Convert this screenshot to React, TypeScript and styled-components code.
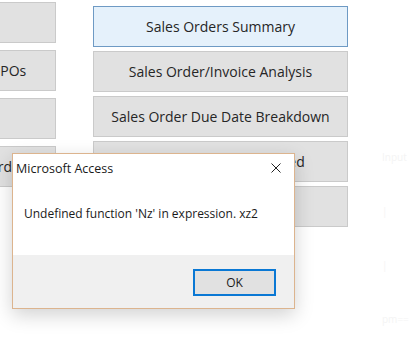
import React from "react";
import styled, { createGlobalStyle } from "styled-components";

const GlobalStyle = createGlobalStyle`
  body {
    margin: 0;
    background: #ffffff;
    overflow: hidden;
  }
`;

const Page = styled.div`
  position: relative;
  width: 409px;
  height: 359px;
  overflow: hidden;
  display: flex;
  align-items: flex-start;
  background: #ffffff;
  font-family: "Open Sans", "Noto Sans", sans-serif;
`;

const LeftColumn = styled.div`
  display: flex;
  flex-direction: column;
  gap: 7px;
  width: 170px;
  margin-left: -114px;
  padding-top: 2px;
  flex-shrink: 0;
`;

const RightColumn = styled.div`
  display: flex;
  flex-direction: column;
  gap: 4px;
  width: 255px;
  margin-left: 37px;
  padding-top: 6px;
  flex-shrink: 0;
`;

const MenuButton = styled.div<{ $active?: boolean; $faint?: boolean }>`
  box-sizing: border-box;
  height: 41px;
  display: flex;
  align-items: center;
  justify-content: center;
  white-space: nowrap;
  font-size: 14px;
  color: ${(p) => (p.$faint ? "#c9c9c9" : "#262626")};
  background: ${(p) => (p.$active ? "#e5f1fb" : "#e1e1e1")};
  border: 1px solid ${(p) => (p.$active ? "#6e9ac4" : "#cacaca")};
`;

const SideNote = styled.div`
  display: flex;
  flex-direction: column;
  gap: 40px;
  margin-left: 34px;
  padding-top: 150px;
  font-size: 10px;
  color: #f4f4f4;
  white-space: nowrap;
`;

const Dialog = styled.div`
  position: absolute;
  left: 12px;
  top: 153px;
  width: 283px;
  height: 156px;
  box-sizing: border-box;
  display: flex;
  flex-direction: column;
  background: #ffffff;
  border: 1px solid #dcb48e;
  box-shadow: 0 6px 18px rgba(0, 0, 0, 0.18);
`;

const TitleBar = styled.div`
  display: flex;
  align-items: center;
  justify-content: space-between;
  height: 28px;
  padding: 0 13px 0 3px;
  font-size: 12.5px;
  color: #1a1a1a;
`;

const CloseIcon = styled.svg`
  width: 10px;
  height: 10px;
`;

const Message = styled.div`
  flex: 1;
  display: flex;
  align-items: center;
  padding: 0 0 10px 11px;
  font-size: 12px;
  color: #1a1a1a;
  white-space: nowrap;
`;

const Footer = styled.div`
  height: 53px;
  background: #f0f0f0;
  display: flex;
  align-items: center;
  justify-content: flex-end;
  padding-right: 18px;
`;

const OkButton = styled.div`
  box-sizing: border-box;
  width: 83px;
  height: 27px;
  display: flex;
  align-items: center;
  justify-content: center;
  background: #e1e1e1;
  border: 2px solid #0a78d4;
  font-size: 12px;
  color: #1a1a1a;
  margin-top: 1px;
`;

const leftItems = [
  { label: "", faint: false },
  { label: "Outstanding POs", faint: false },
  { label: "Analytics", faint: true },
  { label: "Order Board", faint: false },
];

const rightItems = [
  "Sales Orders Summary",
  "Sales Order/Invoice Analysis",
  "Sales Order Due Date Breakdown",
  "Sales Orders Not Invoiced",
  "",
];

export default function App() {
  return (
    <>
      <GlobalStyle />
      <Page>
        <LeftColumn>
          {leftItems.map((item, i) => (
            <MenuButton key={i} $faint={item.faint}>
              {item.label}
            </MenuButton>
          ))}
        </LeftColumn>
        <RightColumn>
          {rightItems.map((label, i) => (
            <MenuButton key={i} $active={i === 0}>
              {label}
            </MenuButton>
          ))}
        </RightColumn>
        <SideNote>
          <span>Input</span>
          <span>|</span>
          <span>|</span>
          <span>pm==</span>
        </SideNote>

        <Dialog>
          <TitleBar>
            <span>Microsoft Access</span>
            <CloseIcon viewBox="0 0 10 10">
              <path d="M0.5 0.5 L9.5 9.5 M9.5 0.5 L0.5 9.5" stroke="#222" strokeWidth="1" />
            </CloseIcon>
          </TitleBar>
          <Message>Undefined function 'Nz' in expression. xz2</Message>
          <Footer>
            <OkButton>OK</OkButton>
          </Footer>
        </Dialog>
      </Page>
    </>
  );
}
